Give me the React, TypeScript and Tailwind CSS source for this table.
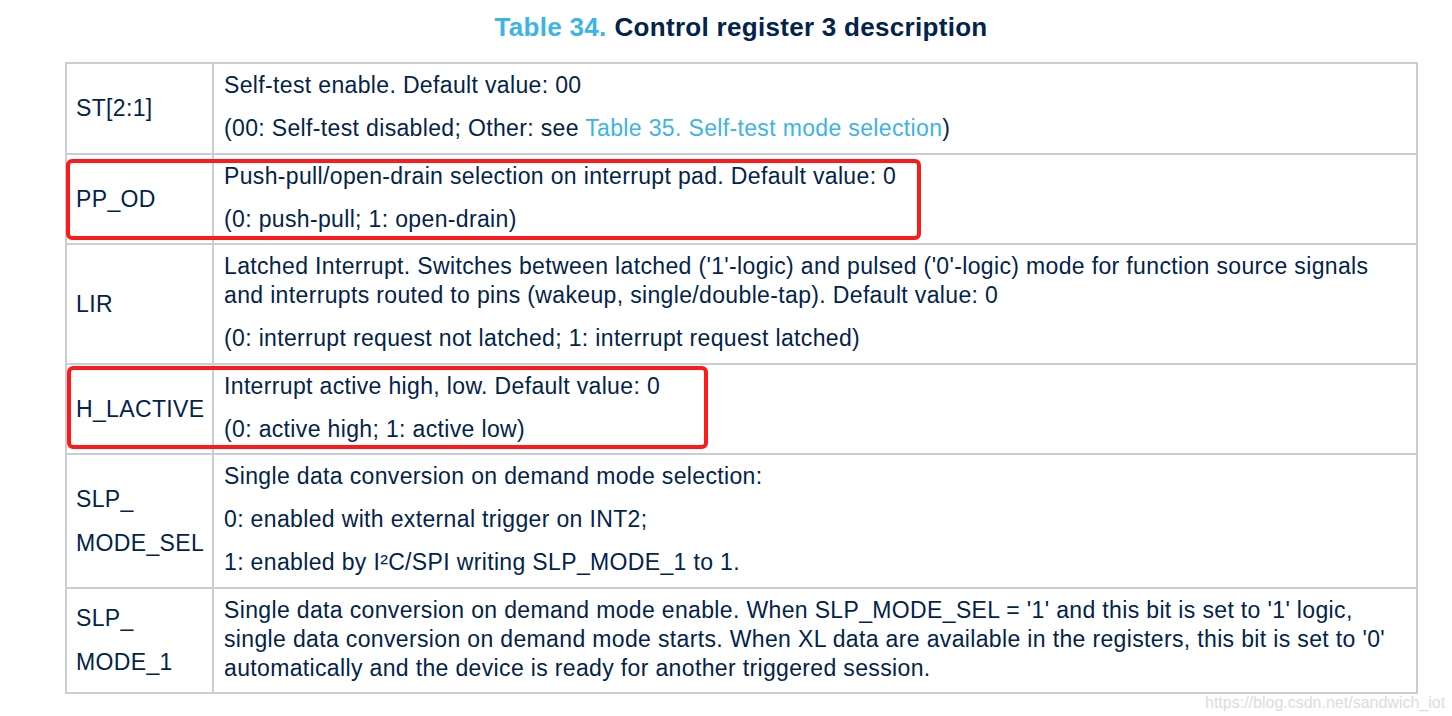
const rows = [
  {
    name: ["ST[2:1]"],
    h: "h-[91px]",
    desc: [
      <>Self-test enable. Default value: 00</>,
      <>
        (00: Self-test disabled; Other: see{" "}
        <span className="text-[#3cb4e6]">Table 35. Self-test mode selection</span>)
      </>,
    ],
  },
  {
    name: ["PP_OD"],
    h: "h-[90px]",
    desc: [
      <>Push-pull/open-drain selection on interrupt pad. Default value: 0</>,
      <>(0: push-pull; 1: open-drain)</>,
    ],
  },
  {
    name: ["LIR"],
    h: "h-[120px]",
    desc: [
      <>
        Latched Interrupt. Switches between latched ('1'-logic) and pulsed ('0'-logic) mode for function source
        signals and interrupts routed to pins (wakeup, single/double-tap). Default value: 0
      </>,
      <>(0: interrupt request not latched; 1: interrupt request latched)</>,
    ],
  },
  {
    name: ["H_LACTIVE"],
    h: "h-[90px]",
    desc: [<>Interrupt active high, low. Default value: 0</>, <>(0: active high; 1: active low)</>],
  },
  {
    name: ["SLP_", "MODE_SEL"],
    h: "h-[134px]",
    desc: [
      <>Single data conversion on demand mode selection:</>,
      <>0: enabled with external trigger on INT2;</>,
      <>1: enabled by I²C/SPI writing SLP_MODE_1 to 1.</>,
    ],
  },
  {
    name: ["SLP_", "MODE_1"],
    h: "h-[105px]",
    desc: [
      <>
        Single data conversion on demand mode enable. When SLP_MODE_SEL = '1' and this bit is set to '1' logic,
        single data conversion on demand mode starts. When XL data are available in the registers, this bit is set
        to '0' automatically and the device is ready for another triggered session.
      </>,
    ],
  },
];

export default function App() {
  return (
    <div className="relative w-[1452px] h-[716px] bg-white font-['Liberation_Sans',Arial,sans-serif] text-[#03234b] overflow-hidden">
      <div className="h-[62px] flex items-center justify-center pl-[30px] pb-[8px] text-[26px] tracking-[0.3px] font-bold">
        <span className="text-[#3cb4e6]">Table 34.</span>
        <span className="ml-[8px] text-[#03234b]">Control register 3 description</span>
      </div>

      <div className="ml-[65px] w-[1353px] border-x-2 border-b-2 border-[#c8ced3] text-[23px] tracking-[0.35px] leading-[29px]">
        {rows.map((r, i) => (
          <div key={i} className={`flex border-t-2 border-[#c8ced3] ${r.h}`}>
            <div className="w-[147px] shrink-0 border-r-2 border-[#c8ced3] pl-[9px] flex flex-col justify-center gap-[15px]">
              {r.name.map((n, j) => (
                <div key={j}>{n}</div>
              ))}
            </div>
            <div className="flex-1 pl-[10px] pr-[12px] pt-[7px] flex flex-col gap-[14px]">
              {r.desc.map((d, j) => (
                <div key={j}>{d}</div>
              ))}
            </div>
          </div>
        ))}
      </div>

      <div className="absolute left-[66px] top-[159px] w-[855px] h-[81px] border-[4px] border-[#ff1a1a] rounded-[6px]" />
      <div className="absolute left-[67px] top-[366px] w-[641px] h-[83px] border-[4px] border-[#ff1a1a] rounded-[6px]" />

      <div className="absolute left-[1205px] top-[694px] text-[16px] leading-[18px] text-[#dcdcdc] font-['Liberation_Sans',Arial,sans-serif]">
        https://blog.csdn.net/sandwich_iot
      </div>
    </div>
  );
}
